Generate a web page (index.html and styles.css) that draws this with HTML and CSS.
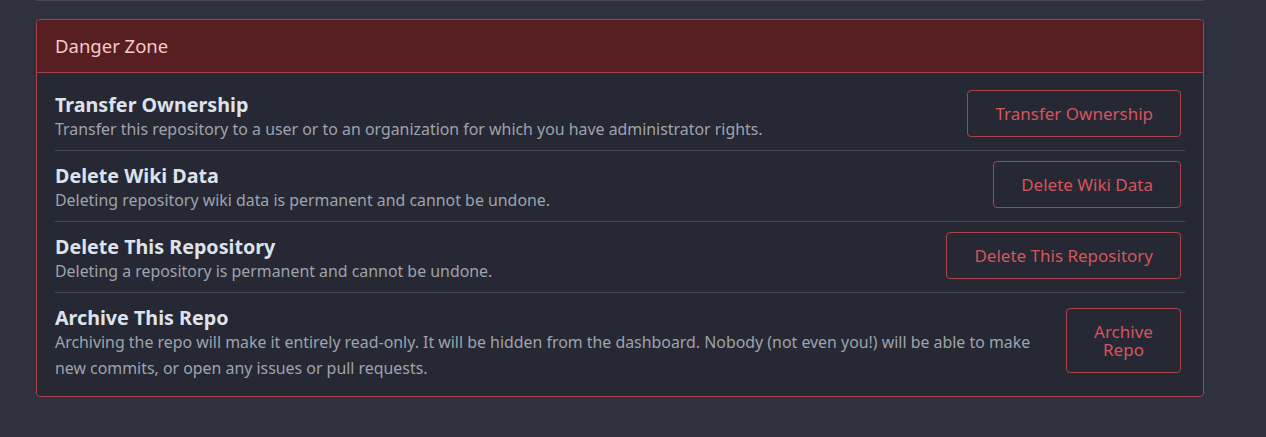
FILE: index.html
```html
<!DOCTYPE html>
<html lang="en">
<head>
  <meta charset="UTF-8">
  <meta name="viewport" content="width=device-width, initial-scale=1">
  <title>Repository Settings</title>
  <link rel="stylesheet" href="styles.css">
</head>
<body>

<div class="page">
  <!-- end of the segment above -->
  <div class="prev-segment"></div>

  <div class="danger-zone">
    <h4 class="dz-header">Danger Zone</h4>
    <div class="dz-body">

      <div class="dz-item">
        <div class="dz-text">
          <h5>Transfer Ownership</h5>
          <p>Transfer this repository to a user or to an organization for which you have administrator rights.</p>
        </div>
        <button class="btn-danger">Transfer Ownership</button>
      </div>

      <div class="dz-item">
        <div class="dz-text">
          <h5>Delete Wiki Data</h5>
          <p>Deleting repository wiki data is permanent and cannot be undone.</p>
        </div>
        <button class="btn-danger">Delete Wiki Data</button>
      </div>

      <div class="dz-item">
        <div class="dz-text">
          <h5>Delete This Repository</h5>
          <p>Deleting a repository is permanent and cannot be undone.</p>
        </div>
        <button class="btn-danger">Delete This Repository</button>
      </div>

      <div class="dz-item">
        <div class="dz-text">
          <h5>Archive This Repo</h5>
          <p>Archiving the repo will make it entirely read-only. It will be hidden from the dashboard. Nobody (not even you!) will be able to make new commits, or open any issues or pull requests.</p>
        </div>
        <button class="btn-danger btn-narrow">Archive Repo</button>
      </div>

    </div>
  </div>
</div>

</body>
</html>
```

FILE: styles.css
```css
body {
  margin: 0;
  background: #2f323e;
  font-family: "Noto Sans", "Open Sans", sans-serif;
  color: #dbe0ea;
}
.page {
  padding: 0 62px 0 36px;
}
.prev-segment {
  height: 1px;
  background: #454955;
}
.danger-zone {
  margin-top: 18px;
  border: 1px solid #a5424b;
  border-radius: 4px;
  background: #262833;
}
.dz-header {
  margin: 0;
  padding: 0 18px;
  height: 52px;
  line-height: 52px;
  background: #581f22;
  color: #f4c9c9;
  font-size: 18.5px;
  font-weight: normal;
  border-bottom: 1px solid #a5424b;
  border-radius: 3px 3px 0 0;
}
.dz-body {
  padding: 7px 18px 7px;
}
.dz-item {
  display: flex;
  align-items: center;
  gap: 23px;
  padding: 9px 0 8px;
}
.dz-item + .dz-item {
  border-top: 1px solid #474b57;
}
.dz-text {
  flex: 1;
  padding-top: 5px;
}
.dz-text h5 {
  margin: 0;
  font-size: 19.7px;
  line-height: 22px;
  font-weight: bold;
  color: #dde2ec;
}
.dz-text p {
  margin: 0;
  font-size: 15.9px;
  line-height: 26px;
  color: #9ea3ad;
}
.btn-danger {
  flex: none;
  margin: 0 4px 4px 0;
  height: 47px;
  padding: 0 27px;
  background: transparent;
  border: 1px solid #a8444c;
  border-radius: 4px;
  color: #d4555e;
  font-family: inherit;
  font-size: 17px;
  cursor: pointer;
}
.btn-narrow {
  width: 115px;
  height: 65px;
  margin-bottom: 2px;
  padding: 0 20px;
  line-height: 18px;
}
```
